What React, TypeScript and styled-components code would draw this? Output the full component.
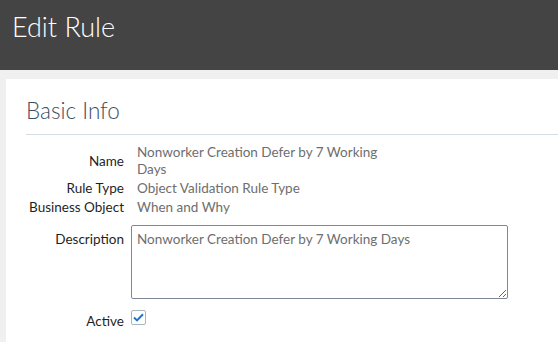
import React, { useState } from "react";
import styled, { createGlobalStyle } from "styled-components";

const GlobalStyle = createGlobalStyle`
  html, body {
    margin: 0;
    padding: 0;
    background: #f0f0f0;
    font-family: "Segoe UI", Lato, "Noto Sans", sans-serif;
  }
  #root {
    min-height: 100vh;
    display: flex;
    flex-direction: column;
  }
`;

const Header = styled.header`
  height: 70px;
  box-sizing: border-box;
  background-color: #444444;
  padding: 11px 0 0 12px;
  flex-shrink: 0;
`;

const Title = styled.h1`
  margin: 0;
  font-size: 27px;
  line-height: 1.2;
  font-weight: 300;
  color: #ffffff;
`;

const Main = styled.main`
  flex: 1;
  display: flex;
  padding: 9px 0 0 6px;
`;

const Card = styled.section`
  flex: 1;
  background: #ffffff;
  padding: 18px 0 20px 20px;
`;

const SectionTitle = styled.h2`
  margin: 0;
  padding-bottom: 10px;
  font-size: 22.5px;
  line-height: 1.2;
  font-weight: 300;
  color: #3e4d5e;
  border-bottom: 1px solid #d5dce3;
`;

const Form = styled.div`
  display: grid;
  grid-template-columns: 98px 1fr;
  column-gap: 7px;
  row-gap: 2px;
  padding-top: 9px;
  font-size: 13.5px;
  line-height: 17px;
`;

const Label = styled.div<{ $top?: number }>`
  text-align: right;
  color: #1f1f1f;
  align-self: ${(p) => (p.$top !== undefined ? "start" : "center")};
  padding-top: ${(p) => p.$top ?? 0}px;
`;

const Value = styled.div<{ $width?: number }>`
  color: #6e6e6e;
  padding-left: 6px;
  max-width: ${(p) => (p.$width ? `${p.$width}px` : "none")};
`;

const DescriptionArea = styled.textarea`
  display: block;
  width: 377px;
  height: 74px;
  box-sizing: border-box;
  margin: 7px 0 0 0;
  padding: 5px;
  border: 1px solid #7d8a96;
  border-radius: 2px;
  font-family: inherit;
  font-size: 13.5px;
  line-height: 17px;
  color: #6e6e6e;
  resize: both;
  outline: none;
`;

const CheckRow = styled.div`
  padding-top: 9px;
  display: flex;
  align-items: flex-start;
`;

const CheckBox = styled.button<{ $checked: boolean }>`
  width: 15px;
  height: 15px;
  padding: 0;
  border: 1px solid #a9b6c2;
  border-radius: 2px;
  background: #ffffff;
  display: flex;
  align-items: center;
  justify-content: center;
  cursor: pointer;
  svg {
    visibility: ${(p) => (p.$checked ? "visible" : "hidden")};
  }
`;

const App = () => {
  const [active, setActive] = useState(true);
  const [description, setDescription] = useState(
    "Nonworker Creation Defer by 7 Working Days"
  );

  return (
    <>
      <GlobalStyle />
      <Header>
        <Title>Edit Rule</Title>
      </Header>
      <Main>
        <Card>
          <SectionTitle>Basic Info</SectionTitle>
          <Form>
            <Label>Name</Label>
            <Value $width={252}>Nonworker Creation Defer by 7 Working Days</Value>

            <Label>Rule Type</Label>
            <Value>Object Validation Rule Type</Value>

            <Label>Business Object</Label>
            <Value>When and Why</Value>

            <Label $top={13}>Description</Label>
            <div>
              <DescriptionArea
                value={description}
                onChange={(e) => setDescription(e.target.value)}
              />
            </div>

            <Label $top={12}>Active</Label>
            <CheckRow>
              <CheckBox
                type="button"
                $checked={active}
                onClick={() => setActive(!active)}
                aria-label="Active"
              >
                <svg width="11" height="9" viewBox="0 0 11 9">
                  <path
                    d="M1 4.6 L4 7.4 L10 1.2"
                    fill="none"
                    stroke="#1b74d6"
                    strokeWidth="2"
                  />
                </svg>
              </CheckBox>
            </CheckRow>
          </Form>
        </Card>
      </Main>
    </>
  );
};

export default App;
